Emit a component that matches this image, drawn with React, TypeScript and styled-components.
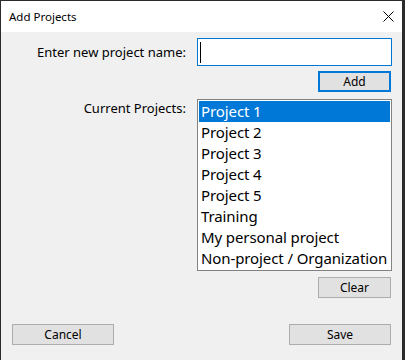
import styled, { createGlobalStyle } from "styled-components";

const GlobalStyle = createGlobalStyle`
  html, body {
    margin: 0;
    padding: 0;
    background: #2b2b2b;
  }
  body {
    font-family: "Noto Sans", "Open Sans", sans-serif;
  }
`;

const Window = styled.div`
  margin: 1px 0 0 1px;
  width: 401px;
  height: 359px;
  background: #f0f0f0;
  display: flex;
  flex-direction: column;
`;

const TitleBar = styled.div`
  height: 31px;
  background: #ffffff;
  display: flex;
  align-items: center;
  justify-content: space-between;
  padding: 0 8px 0 8px;
  box-sizing: border-box;
`;

const Title = styled.span`
  font-size: 11.5px;
  color: #000;
  margin-top: -1px;
`;

const CloseButton = styled.button`
  border: none;
  background: transparent;
  padding: 0;
  width: 12px;
  height: 12px;
  display: flex;
  align-items: center;
  justify-content: center;
`;

const Body = styled.div`
  flex: 1;
  padding: 6px 11px 0 11px;
  display: flex;
  flex-direction: column;
`;

const Row = styled.div<{ $top?: boolean; $gap?: number }>`
  display: grid;
  grid-template-columns: 174px 195px;
  column-gap: 11px;
  align-items: ${(p) => (p.$top ? "start" : "center")};
  margin-top: ${(p) => p.$gap ?? 0}px;
`;

const Label = styled.label`
  font-size: 13px;
  line-height: 19px;
  color: #000;
  text-align: right;
  white-space: nowrap;
`;

const TextBox = styled.div`
  height: 28px;
  box-sizing: border-box;
  border: 1px solid #0078d7;
  background: #fff;
  display: flex;
  align-items: center;
  padding-left: 2px;
`;

const Caret = styled.span`
  width: 1px;
  height: 21px;
  background: #000;
`;

const ButtonRow = styled.div<{ $gap: number; $split?: boolean }>`
  display: flex;
  justify-content: ${(p) => (p.$split ? "space-between" : "flex-end")};
  margin-top: ${(p) => p.$gap}px;
`;

const Button = styled.button<{ $focused?: boolean; $w: number }>`
  width: ${(p) => p.$w}px;
  height: 21px;
  box-sizing: border-box;
  border: ${(p) => (p.$focused ? "2px solid #0078d7" : "1px solid #adadad")};
  background: #e1e1e1;
  font-family: "Noto Sans", "Open Sans", sans-serif;
  font-size: 12px;
  color: #000;
  padding: 0;
  line-height: 17px;
`;

const ListBox = styled.ul`
  list-style: none;
  margin: 0;
  height: 172px;
  box-sizing: border-box;
  border: 1px solid #828282;
  background: #fff;
  padding: 1px;
  overflow: hidden;
`;

const Item = styled.li<{ $selected?: boolean }>`
  height: 21px;
  line-height: 21px;
  font-size: 15px;
  letter-spacing: -0.1px;
  padding-left: 2px;
  white-space: nowrap;
  color: ${(p) => (p.$selected ? "#fff" : "#000")};
  background: ${(p) => (p.$selected ? "#0078d7" : "transparent")};
`;

const projects = [
  "Project 1",
  "Project 2",
  "Project 3",
  "Project 4",
  "Project 5",
  "Training",
  "My personal project",
  "Non-project / Organization",
];

export default function App() {
  return (
    <>
      <GlobalStyle />
      <Window>
        <TitleBar>
          <Title>Add Projects</Title>
          <CloseButton aria-label="Close">
            <svg width="11" height="11" viewBox="0 0 11 11">
              <path d="M0.5 0.5 L10.5 10.5 M10.5 0.5 L0.5 10.5" stroke="#000" strokeWidth="1" />
            </svg>
          </CloseButton>
        </TitleBar>
        <Body>
          <Row>
            <Label>Enter new project name:</Label>
            <TextBox>
              <Caret />
            </TextBox>
          </Row>
          <ButtonRow $gap={5}>
            <Button $focused $w={73}>Add</Button>
          </ButtonRow>
          <Row $top $gap={7}>
            <Label>Current Projects:</Label>
            <ListBox>
              {projects.map((name, i) => (
                <Item key={name} $selected={i === 0}>
                  {name}
                </Item>
              ))}
            </ListBox>
          </Row>
          <ButtonRow $gap={6}>
            <Button $w={73}>Clear</Button>
          </ButtonRow>
          <ButtonRow $gap={26} $split>
            <Button $w={102}>Cancel</Button>
            <Button $w={102}>Save</Button>
          </ButtonRow>
        </Body>
      </Window>
    </>
  );
}
